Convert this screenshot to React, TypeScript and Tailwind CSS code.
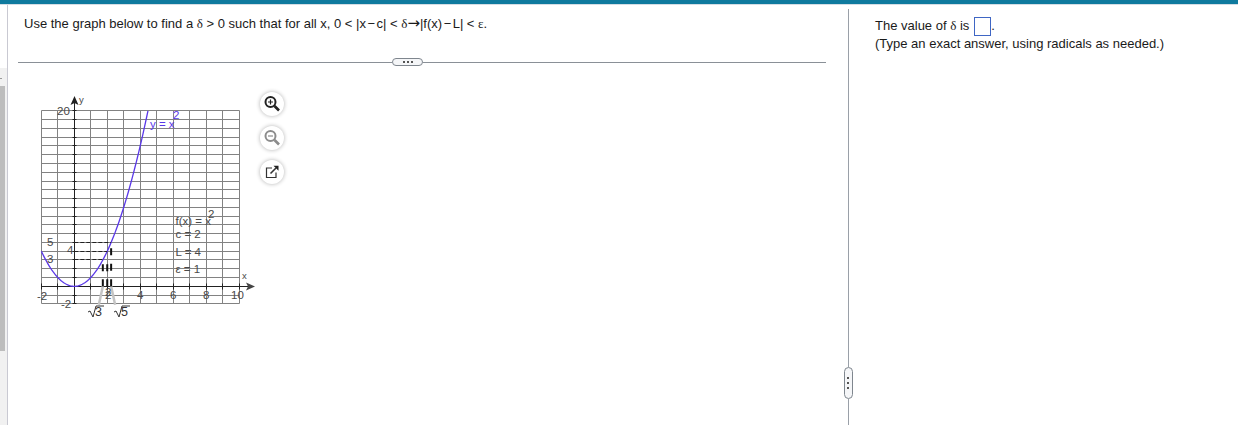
import React from "react";

const X = (v: number) => 74.3 + v * 16.47 - 30;
const Y = (v: number) => 285.3 - v * 8.77 - 85;
const snap = (n: number) => Math.floor(n) + 0.5;
const xs = Array.from({ length: 13 }, (_, i) => i - 2);
const ys = Array.from({ length: 23 }, (_, i) => i - 2);

function curve() {
  const pts: string[] = [];
  for (let x = -2; x <= 4.472; x += 0.08) pts.push(`${X(x).toFixed(2)},${Y(x * x).toFixed(2)}`);
  pts.push(`${X(4.472).toFixed(2)},${Y(20).toFixed(2)}`);
  return pts.join(" ");
}

function Label({ x, y, children, fill = "#4a4a4a", size = 11.5 }: { x: number; y: number; children: React.ReactNode; fill?: string; size?: number }) {
  return (
    <text x={x} y={y} fill={fill} fontSize={size} fontFamily="Liberation Sans, Arial, sans-serif">
      {children}
    </text>
  );
}

function Radical({ x, y, n }: { x: number; y: number; n: string }) {
  return (
    <g>
      <path d={`M${x} ${y - 4} l2 -1 l3 6 l3 -11 h8`} fill="none" stroke="#333" strokeWidth={1} />
      <Label x={x + 7} y={y} size={12.5} fill="#333">{n}</Label>
    </g>
  );
}

function Graph() {
  const s3 = Math.sqrt(3);
  const s5 = Math.sqrt(5);
  return (
    <svg width={232} height={240} viewBox="0 0 232 240" className="block shrink-0">
      {xs.map((v) => (
        <line key={v} x1={snap(X(v))} x2={snap(X(v))} y1={snap(Y(20))} y2={snap(Y(-2))} stroke="#828282" strokeWidth={1} />
      ))}
      {ys.map((v) => (
        <line key={v} x1={snap(X(-2))} x2={snap(X(10))} y1={snap(Y(v))} y2={snap(Y(v))} stroke="#828282" strokeWidth={1} />
      ))}
      <line x1={snap(X(0))} x2={snap(X(0))} y1={Y(20) - 9} y2={snap(Y(-2))} stroke="#222" strokeWidth={1} />
      <line x1={snap(X(-2))} x2={X(10) + 12} y1={snap(Y(0))} y2={snap(Y(0))} stroke="#222" strokeWidth={1} />
      {xs.map((v) => (
        <line key={v} x1={snap(X(v))} x2={snap(X(v))} y1={snap(Y(0)) - 3} y2={snap(Y(0)) + 3} stroke="#222" strokeWidth={1} />
      ))}
      {ys.map((v) => (
        <line key={v} x1={snap(X(0)) - 2} x2={snap(X(0)) + 2} y1={snap(Y(v))} y2={snap(Y(v))} stroke="#222" strokeWidth={1} />
      ))}
      <path d={`M${snap(X(0))} ${Y(20) - 15} l-4 9 l4 -2 l4 2 z`} fill="#222" />
      <path d={`M${X(10) + 16} ${snap(Y(0))} l-9 -4 l2 4 l-2 4 z`} fill="#444" />

      <line x1={X(s3)} y1={Y(0)} x2={X(s3) - 4} y2={Y(-2) + 1} stroke="#c4c4c4" strokeWidth={2.5} />
      <line x1={X(s5)} y1={Y(0)} x2={X(s5) + 4} y2={Y(-2) + 1} stroke="#c4c4c4" strokeWidth={2.5} />

      <polyline points={curve()} fill="none" stroke="#5a38e8" strokeWidth={1.3} />

      {[5, 4, 3].map((v) => (
        <line key={v} x1={X(0)} x2={X(Math.sqrt(v))} y1={snap(Y(v))} y2={snap(Y(v))} stroke="#222" strokeWidth={1} strokeDasharray="4 2" />
      ))}
      <line x1={X(s3)} x2={X(s3)} y1={Y(0)} y2={Y(3)} stroke="#111" strokeWidth={2} strokeDasharray="7 8" />
      <line x1={X(2)} x2={X(2)} y1={Y(0)} y2={Y(3)} stroke="#111" strokeWidth={2} strokeDasharray="7 8" />
      <line x1={X(s5)} x2={X(s5)} y1={Y(0)} y2={Y(5)} stroke="#111" strokeWidth={2} strokeDasharray="7 8.5" />

      <Label x={49} y={17} size={9.5}>y</Label>
      <Label x={27} y={29}>20</Label>
      <Label x={17} y={160}>5</Label>
      <Label x={37} y={168}>4</Label>
      <Label x={17} y={177}>3</Label>
      <Label x={212} y={193} size={9.5}>x</Label>
      <Label x={7} y={214}>-2</Label>
      <Label x={31} y={222}>-2</Label>
      <Label x={75} y={213}>2</Label>
      <Label x={75} y={210}>2</Label>
      <Label x={107} y={213}>4</Label>
      <Label x={140} y={213}>6</Label>
      <Label x={173} y={213}>8</Label>
      <Label x={201} y={213}>10</Label>
      <Radical x={58} y={230} n="3" />
      <Radical x={84} y={230} n="5" />

      <Label x={120} y={42} fill="#5a38e8">y = x</Label>
      <Label x={143} y={33} fill="#5a38e8">2</Label>

      <Label x={145.5} y={139}>f(x) = x</Label>
      <Label x={178} y={132}>2</Label>
      <Label x={145.5} y={152}>c = 2</Label>
      <Label x={145.5} y={170}>L = 4</Label>
      <Label x={145.5} y={187}>ε = 1</Label>
    </svg>
  );
}

function ToolButton({ children }: { children: React.ReactNode }) {
  return (
    <div className="w-[24px] h-[24px] rounded-full bg-white shadow-[0_0_4px_rgba(0,0,0,0.3)] flex items-center justify-center">
      {children}
    </div>
  );
}

function Tools() {
  return (
    <div className="flex flex-col gap-[10px] pt-[6px] ml-[-2px]">
      <ToolButton>
        <svg width="20" height="20" viewBox="0 0 20 20" fill="none" stroke="#222">
          <circle cx="8.5" cy="8" r="5" strokeWidth="2" />
          <path d="M12.5 12 L17 16.5" strokeWidth="2.6" />
          <path d="M6 8h5M8.5 5.5v5" strokeWidth="1.2" />
        </svg>
      </ToolButton>
      <ToolButton>
        <svg width="20" height="20" viewBox="0 0 20 20" fill="none" stroke="#8c8c8c">
          <circle cx="8.5" cy="8" r="5" strokeWidth="2" />
          <path d="M12.5 12 L17 16.5" strokeWidth="2.6" />
          <path d="M6 8h5" strokeWidth="1.2" />
        </svg>
      </ToolButton>
      <ToolButton>
        <svg width="18" height="18" viewBox="0 0 18 18" fill="none" stroke="#333">
          <path d="M9 5H3.5v9.5H13V9.5" strokeWidth="1.2" />
          <path d="M7.5 10.5 L13 5" strokeWidth="1.6" />
          <path d="M10.5 2.8h5v5z" fill="#222" stroke="none" />
        </svg>
      </ToolButton>
    </div>
  );
}

const Sym = ({ children }: { children: React.ReactNode }) => (
  <span className="font-['Liberation_Serif','DejaVu_Serif',serif]">{children}</span>
);

const Op = ({ children }: { children: React.ReactNode }) => <span className="mx-[1.5px]">{children}</span>;

export default function App() {
  return (
    <div className="w-[1238px] h-[425px] overflow-hidden bg-white flex flex-col font-['Liberation_Sans',Arial,sans-serif] text-[13px] leading-[16px] text-[#1a1a1a]">
      <div className="h-[4px] bg-[#0f7a9e] shrink-0" />
      <div className="h-[1px] bg-[#d5dde4] shrink-0" />
      <div className="flex flex-1 min-h-0">
        <div className="w-[8px] shrink-0 border-r border-[#c9c9d2] flex flex-col">
          <div className="h-[63px]" />
          <div className="w-[7px] flex-1 bg-[#f1f1f1] flex flex-col">
            <div className="h-[10px]" />
            <div className="w-[2px] h-[1px] bg-[#999]" />
            <div className="h-[7px]" />
            <div className="w-[5px] h-[265px] bg-[#bdbdbd]" />
          </div>
        </div>

        <div className="w-[835px] shrink-0 pl-[10px] pr-[17px] flex flex-col">
          <p className="ml-[6px] mt-[10px] whitespace-nowrap">
            Use the graph below to find a <Sym>δ</Sym> &gt; 0 such that for all x, 0 &lt; |x<Op>−</Op>c| &lt; <Sym>δ</Sym>
            <span className="font-['DejaVu_Sans',sans-serif] text-[15px] leading-[16px]">→</span>|f(x)<Op>−</Op>L|
            <span className="mx-[3.5px]">&lt;</span>
            <Sym>ε</Sym>.
          </p>
          <div className="flex items-center mt-[26px] h-[8px]">
            <div className="h-[1px] w-[374px] bg-[#8a9097]" />
            <div className="w-[31px] h-[8px] rounded-full border border-[#7f868e] bg-[#f5f6f8] flex items-center justify-center gap-[2px]">
              <span className="w-[2px] h-[2px] bg-[#555]" />
              <span className="w-[2px] h-[2px] bg-[#555]" />
              <span className="w-[2px] h-[2px] bg-[#555]" />
            </div>
            <div className="h-[1px] flex-1 bg-[#8a9097]" />
          </div>
          <div className="flex ml-[12px] mt-[20px]">
            <Graph />
            <Tools />
          </div>
        </div>

        <div className="w-[10px] shrink-0 flex flex-col items-center pt-[4px]">
          <div className="w-[1px] h-[358px] bg-[#9aa0a8]" />
          <div className="w-[9px] h-[32px] shrink-0 rounded-full border border-[#7f868e] bg-[#f5f6f8] flex flex-col items-center justify-center gap-[3px]">
            <span className="w-[2px] h-[2px] bg-[#555]" />
            <span className="w-[2px] h-[2px] bg-[#555]" />
            <span className="w-[2px] h-[2px] bg-[#555]" />
          </div>
          <div className="w-[1px] flex-1 bg-[#9aa0a8]" />
        </div>

        <div className="flex-1 pl-[22px] pt-[12px]">
          <div className="flex items-center h-[18px] whitespace-nowrap">
            <span>The value of <Sym>δ</Sym> is</span>
            <span className="w-[17px] h-[19px] ml-[5px] border border-[#3f66c4] bg-white" />
            <span>.</span>
          </div>
          <p className="mt-[1px] whitespace-nowrap">(Type an exact answer, using radicals as needed.)</p>
        </div>
      </div>
    </div>
  );
}
